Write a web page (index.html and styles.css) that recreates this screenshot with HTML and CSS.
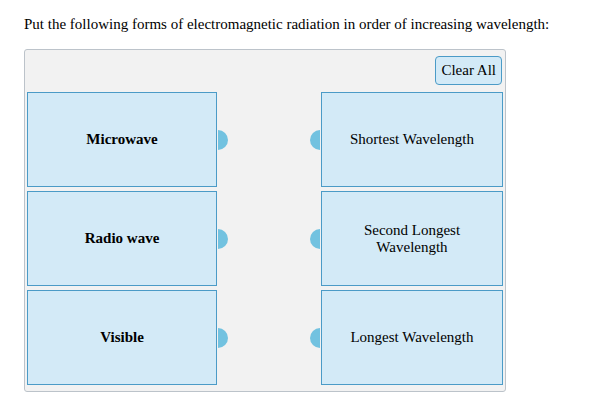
FILE: index.html
```html
<!DOCTYPE html>
<html>
<head>
<meta charset="utf-8">
<link rel="stylesheet" href="styles.css">
</head>
<body>
<p class="prompt">Put the following forms of electromagnetic radiation in order of increasing wavelength:</p>
<div class="board">
  <div class="toolbar"><button class="clear">Clear All</button></div>
  <div class="grid">
    <div class="item bold">Microwave<span class="knob out"></span></div>
    <div class="gap"></div>
    <div class="target"><span class="knob in"></span>Shortest Wavelength</div>

    <div class="item bold">Radio wave<span class="knob out"></span></div>
    <div class="gap"></div>
    <div class="target"><span class="knob in"></span>Second Longest<br>Wavelength</div>

    <div class="item bold">Visible<span class="knob out"></span></div>
    <div class="gap"></div>
    <div class="target"><span class="knob in"></span>Longest Wavelength</div>
  </div>
</div>
</body>
</html>
```

FILE: styles.css
```css
html, body {
  margin: 0;
  padding: 0;
  background: #ffffff;
}
body {
  font-family: "Liberation Serif", "Times New Roman", serif;
  color: #000;
  padding: 15px 24px 0 24px;
}
.prompt {
  margin: 0 0 16px 0;
  font-size: 15px;
  line-height: 18px;
}
.board {
  width: 476px;
  background: #f2f2f2;
  border: 1px solid #bcc3ca;
  border-radius: 3px;
  padding: 6px 2px 6px 2px;
  box-sizing: content-box;
}
.toolbar {
  display: flex;
  justify-content: flex-end;
  padding-right: 1px;
  margin-bottom: 7px;
}
.clear {
  font-family: "Liberation Serif", "Times New Roman", serif;
  font-size: 15px;
  color: #000;
  background: #d3eaf7;
  border: 1px solid #4b9bc7;
  border-radius: 4px;
  height: 29px;
  padding: 0 5px;
}
.grid {
  display: grid;
  grid-template-columns: 190px 104px 182px;
  grid-auto-rows: 95px;
  row-gap: 4px;
}
.item, .target {
  position: relative;
  box-sizing: border-box;
  background: #d3eaf7;
  border: 1px solid #4b9bc7;
  display: flex;
  align-items: center;
  justify-content: center;
  text-align: center;
  font-size: 15px;
  line-height: 17px;
}
.bold {
  font-weight: bold;
}
.knob {
  position: absolute;
  top: 50%;
  width: 10px;
  height: 20px;
  margin-top: -10px;
  background: #72c2e0;
}
.knob.out {
  right: -12px;
  border-radius: 0 10px 10px 0;
}
.knob.in {
  left: -12px;
  border-radius: 10px 0 0 10px;
}
```
